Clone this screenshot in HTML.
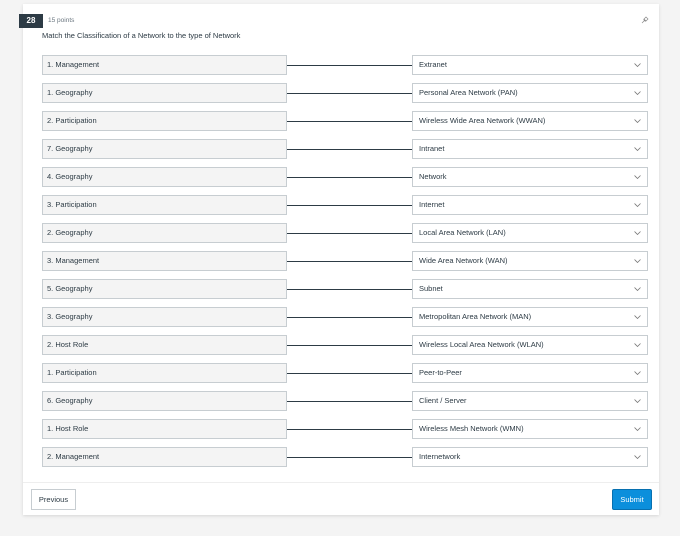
<!DOCTYPE html><html><head><style>
body{margin:0;width:680px;height:536px;background:#f4f4f4;font-family:"Liberation Sans",sans-serif;position:relative;overflow:hidden}
.card{position:absolute;left:23px;top:4px;width:636px;height:511px;background:#fff;box-shadow:0 1px 3px rgba(0,0,0,.12)}
.abs{position:absolute}
.l{position:absolute;left:42px;width:245px;height:20px;border:1px solid #c7cdd1;background:#f4f4f4;font-size:7.5px;color:#2d3b45;line-height:18px;padding-left:4px;box-sizing:border-box}
.ln{position:absolute;left:287px;width:125px;height:1px;background:#2d3b45}
.r{position:absolute;left:412px;border:1px solid #c7cdd1;background:#fff;font-size:7.5px;color:#2d3b45;line-height:18px;padding-left:6px;box-sizing:border-box;width:236px;height:20px}
.r svg{position:absolute;right:6px;top:7px}
</style></head><body>
<div class="card"></div>
<div class="abs" style="left:19px;top:14px;width:24px;height:14px;background:#2d3b45;color:#fff;font-size:8px;font-weight:bold;text-align:center;line-height:14px">28</div>
<div class="abs" style="left:48px;top:17px;font-size:6.5px;color:#6b7780">15 points</div>
<div class="abs" style="left:42px;top:31px;font-size:7.5px;color:#2d3b45">Match the Classification of a Network to the type of Network</div>
<svg class="abs" style="left:641px;top:16px" width="8" height="8" viewBox="0 0 8 8"><path d="M1 7L3.5 4.5M2.5 3.5L4.5 5.5M3 3L5 1L7 3L5 5Z" fill="none" stroke="#888" stroke-width="0.7"/></svg>
<div id="rows"></div>
<div class="abs" style="left:23px;top:482px;width:636px;height:1px;background:#eee"></div>
<div class="abs" style="left:31px;top:489px;width:43px;height:19px;border:1px solid #c7cdd1;font-size:7.5px;color:#2d3b45;text-align:center;line-height:19px">Previous</div>
<div class="abs" style="left:612px;top:489px;width:38px;height:19px;background:#0b8fdc;border:1px solid #0770b0;font-size:7.5px;color:#fff;text-align:center;line-height:19px;border-radius:2px">Submit</div>
<script>
var L=["1. Management","1. Geography","2. Participation","7. Geography","4. Geography","3. Participation","2. Geography","3. Management","5. Geography","3. Geography","2. Host Role","1. Participation","6. Geography","1. Host Role","2. Management"];
var R=["Extranet","Personal Area Network (PAN)","Wireless Wide Area Network (WWAN)","Intranet","Network","Internet","Local Area Network (LAN)","Wide Area Network (WAN)","Subnet","Metropolitan Area Network (MAN)","Wireless Local Area Network (WLAN)","Peer-to-Peer","Client / Server","Wireless Mesh Network (WMN)","Internetwork"];
var h="";for(var i=0;i<15;i++){var y=55+i*28;
h+='<div class="l" style="top:'+y+'px">'+L[i]+'</div><div class="ln" style="top:'+(y+10)+'px"></div><div class="r" style="top:'+y+'px">'+R[i]+'<svg width="7" height="4" viewBox="0 0 7 4"><path d="M0.5 0.5L3.5 3.5L6.5 0.5" fill="none" stroke="#777" stroke-width="0.8"/></svg></div>';}
document.getElementById("rows").innerHTML=h;
</script>
</body></html>
